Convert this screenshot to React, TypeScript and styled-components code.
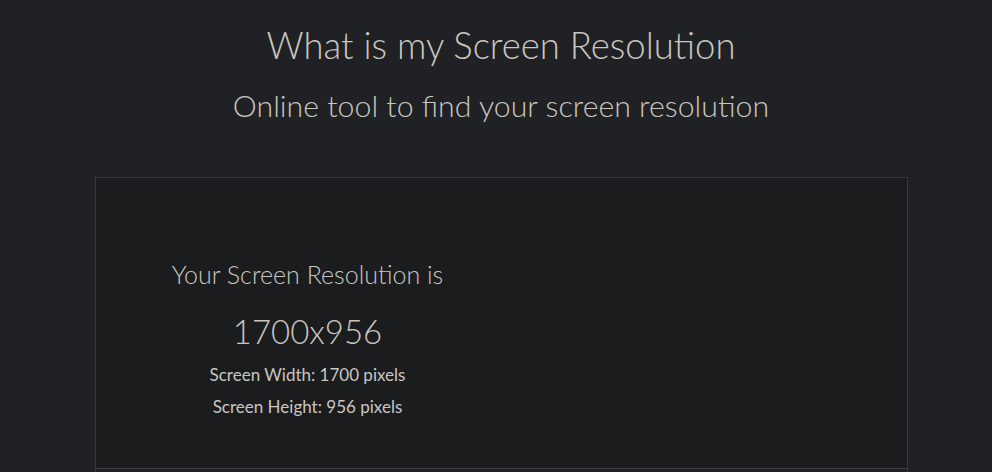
import React from 'react'
import styled, { createGlobalStyle } from 'styled-components'

const GlobalStyle = createGlobalStyle`
  html, body {
    margin: 0;
    padding: 0;
    background: #202124;
  }
  body {
    font-family: Lato, "Liberation Sans", sans-serif;
    color: #c9c6c0;
  }
`

const Page = styled.div`
  padding-left: 10px;
  height: 472px;
  overflow: hidden;
`

const Header = styled.header`
  text-align: center;
  padding-top: 23px;
`

const Title = styled.h1`
  margin: 0;
  font-size: 36.5px;
  font-weight: 300;
  line-height: 44px;
  color: #c9c6c0;
`

const Subtitle = styled.h2`
  margin: 19px 0 0;
  font-size: 30.3px;
  font-weight: 300;
  line-height: 38px;
  color: #c9c6c0;
`

const Card = styled.section`
  width: 811px;
  margin: 53px auto 0;
  border: 1px solid #37383b;
  background: #1b1c1e;
`

const Panel = styled.div`
  display: grid;
  grid-template-columns: 424px 1fr;
  height: 290px;
  border-bottom: 1px solid #3b3f41;
`

const Result = styled.div`
  text-align: center;
  padding-top: 81px;
`

const Lead = styled.p`
  margin: 0;
  font-size: 25px;
  font-weight: 300;
  line-height: 30px;
`

const Value = styled.p`
  margin: 22px 0 0;
  font-size: 33px;
  font-weight: 300;
  line-height: 40px;
`

const Detail = styled.p<{ $gap: number }>`
  margin: ${(p) => p.$gap}px 0 0;
  font-size: 17px;
  font-weight: 400;
  line-height: 28px;
`

const Footer = styled.div`
  height: 40px;
  background: #1f2123;
`

export default function App() {
  return (
    <Page>
      <GlobalStyle />
      <Header>
        <Title>What is my Screen Resolution</Title>
        <Subtitle>Online tool to find your screen resolution</Subtitle>
      </Header>
      <Card>
        <Panel>
          <Result>
            <Lead>Your Screen Resolution is</Lead>
            <Value>1700x956</Value>
            <Detail $gap={10}>Screen Width: 1700 pixels</Detail>
            <Detail $gap={4}>Screen Height: 956 pixels</Detail>
          </Result>
          <div />
        </Panel>
        <Footer />
      </Card>
    </Page>
  )
}
